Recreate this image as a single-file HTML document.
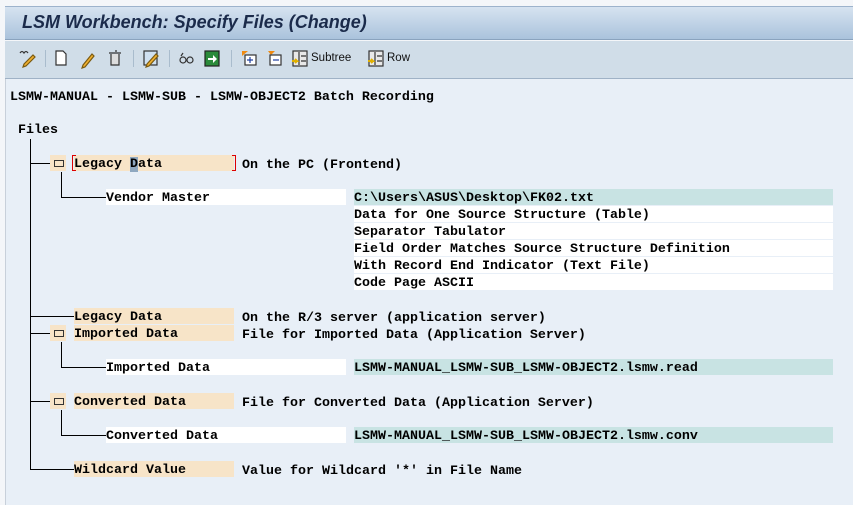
<!DOCTYPE html>
<html><head><meta charset="utf-8"><style>
*{margin:0;padding:0;box-sizing:border-box}
body{width:853px;height:505px;overflow:hidden;background:#f4f6f9;position:relative;font-family:"Liberation Mono",monospace;font-size:13.33px;font-weight:bold;color:#000}
.a{position:absolute}
#title{left:5px;top:6px;width:848px;height:34px;background:linear-gradient(#d6e3f0,#aac3dc);border-top:1px solid #9db3cc;border-bottom:1px solid #8aa3be}
#title span{position:absolute;left:17px;top:5px;font-family:"Liberation Sans",sans-serif;font-style:italic;font-weight:bold;font-size:18px;color:#1b2b4b}
#tb{left:5px;top:41px;width:848px;height:38px;background:#d0dde8;border-bottom:1px solid #9fb2c6}
#ct{left:5px;top:79px;width:848px;height:426px;background:#e8eff7;border-left:1px solid #c8d0da}
.t{position:absolute;line-height:17px;white-space:pre;height:17px;padding-top:2px}
.lab{position:absolute;left:74px;width:160px;height:16px;background:#f7e4c8;line-height:16px;white-space:pre;padding-top:2px}
.wh{position:absolute;left:106px;width:240px;height:16px;background:#fff;line-height:16px;white-space:pre;padding-top:2px}
.val{position:absolute;left:354px;width:479px;height:16px;background:#fff;line-height:16px;white-space:pre;padding-top:2px}
.tl{background:#c8e3e3}
.ln{position:absolute;background:#000}
.fi{position:absolute;left:50px;width:16px;height:16px;background:#f7e4c8}
.fi:after{content:"";position:absolute;left:4px;top:5px;width:8px;height:5px;border:1px solid #333}
.sep{position:absolute;top:50px;width:1px;height:17px;background:#a9bccd}
.tbt{position:absolute;top:52px;font-family:"Liberation Sans",sans-serif;font-weight:normal;font-size:11.5px;color:#111}
</style></head><body>
<div class="a" id="title"><span>LSM Workbench: Specify Files (Change)</span></div>
<div class="a" id="tb"></div>
<svg class="a" style="left:0;top:40px" width="430" height="38">
<g fill="none" stroke-width="1.2">
<path d="M20 13 q2-3 4 0 q2-3 4 0" stroke="#333"/>
<path d="M24 24 l9-9 2 2 -9 9 -3 1z" fill="#f0b030" stroke="#7a5a10"/>
<path d="M56 11 h7 l3 3 v11 h-10z" fill="#fff" stroke="#333"/>
<path d="M83 25 l9-11 2 2 -9 11 -3 1z" fill="#f0b030" stroke="#7a5a10"/>
<path d="M109 13 h12 M111 14 v11 h8 v-11 M115 11 h2" stroke="#333" fill="#ddd"/>
<rect x="144" y="11" width="13" height="14" fill="#cfe0f0" stroke="#333"/>
<path d="M147 24 l9-10 2 2 -9 10 -3 1z" fill="#f0b030" stroke="#7a5a10"/>
<circle cx="183" cy="20" r="3" stroke="#333"/><circle cx="190" cy="20" r="3" stroke="#333"/><path d="M181 16 l2-3" stroke="#333"/>
<rect x="205" y="11" width="14" height="15" fill="#2a8a3a" stroke="#222"/><path d="M208 18 h5 v-3 l4 4 -4 4 v-3 h-5z" fill="#fff" stroke="none"/>
<path d="M242 11 l6 0 -6 5z" fill="#f08a10" stroke="none"/>
<rect x="245" y="15" width="11" height="10" fill="#fff" stroke="#333"/><path d="M250 17 v6 M247 20 h6" stroke="#2040a0"/>
<path d="M268 11 l7 0 -4 4z" fill="#f08a10" stroke="none"/>
<rect x="270" y="15" width="11" height="10" fill="#fff" stroke="#333"/><path d="M273 20 h6" stroke="#2040a0"/>
<rect x="293" y="11" width="14" height="15" fill="#e8e8e8" stroke="#333"/><path d="M299 12 v13 M301 16 h5 M301 21 h5" stroke="#333"/><path d="M292 21 h5 l-2-2 M297 21 l-2 2" stroke="#e0b000" stroke-width="2"/>
<rect x="369" y="11" width="14" height="15" fill="#e8e8e8" stroke="#333"/><path d="M375 12 v13 M377 16 h5 M377 21 h5" stroke="#333"/><path d="M368 21 h5 l-2-2 M373 21 l-2 2" stroke="#e0b000" stroke-width="2"/>
</g></svg>
<div class="sep" style="left:45px"></div><div class="sep" style="left:133px"></div><div class="sep" style="left:169px"></div><div class="sep" style="left:231px"></div>
<span class="tbt" style="left:311px">Subtree</span><span class="tbt" style="left:387px">Row</span>
<div class="a" id="ct"></div>

<div class="t" style="left:10px;top:87px">LSMW-MANUAL - LSMW-SUB - LSMW-OBJECT2 Batch Recording</div>
<div class="t" style="left:18px;top:120px">Files</div>

<div class="ln" style="left:30px;top:139px;width:1px;height:331px"></div>
<div class="ln" style="left:30px;top:163px;width:20px;height:1px"></div>
<div class="ln" style="left:30px;top:316px;width:44px;height:1px"></div>
<div class="ln" style="left:30px;top:333px;width:20px;height:1px"></div>
<div class="ln" style="left:30px;top:401px;width:20px;height:1px"></div>
<div class="ln" style="left:30px;top:469px;width:44px;height:1px"></div>
<div class="ln" style="left:61px;top:172px;width:1px;height:26px"></div>
<div class="ln" style="left:61px;top:197px;width:45px;height:1px"></div>
<div class="ln" style="left:61px;top:342px;width:1px;height:26px"></div>
<div class="ln" style="left:61px;top:367px;width:45px;height:1px"></div>
<div class="ln" style="left:61px;top:410px;width:1px;height:26px"></div>
<div class="ln" style="left:61px;top:435px;width:45px;height:1px"></div>

<div class="fi" style="top:155px"></div>
<div class="lab" style="top:155px">Legacy <span style="background:#8fa8c0">D</span>ata</div>
<div class="a" style="left:72px;top:155px;width:4px;height:16px;border:1px solid #d00;border-right:none"></div>
<div class="a" style="left:232px;top:155px;width:4px;height:16px;border:1px solid #d00;border-left:none"></div>
<div class="t" style="left:242px;top:155px">On the PC (Frontend)</div>

<div class="wh" style="top:189px">Vendor Master</div>
<div class="val tl" style="top:189px">C:\Users\ASUS\Desktop\FK02.txt</div>
<div class="val" style="top:206px">Data for One Source Structure (Table)</div>
<div class="val" style="top:223px">Separator Tabulator</div>
<div class="val" style="top:240px">Field Order Matches Source Structure Definition</div>
<div class="val" style="top:257px">With Record End Indicator (Text File)</div>
<div class="val" style="top:274px">Code Page ASCII</div>

<div class="lab" style="top:308px">Legacy Data</div>
<div class="t" style="left:242px;top:308px">On the R/3 server (application server)</div>
<div class="fi" style="top:325px"></div>
<div class="lab" style="top:325px">Imported Data</div>
<div class="t" style="left:242px;top:325px">File for Imported Data (Application Server)</div>
<div class="wh" style="top:359px">Imported Data</div>
<div class="val tl" style="top:359px">LSMW-MANUAL_LSMW-SUB_LSMW-OBJECT2.lsmw.read</div>

<div class="fi" style="top:393px"></div>
<div class="lab" style="top:393px">Converted Data</div>
<div class="t" style="left:242px;top:393px">File for Converted Data (Application Server)</div>
<div class="wh" style="top:427px">Converted Data</div>
<div class="val tl" style="top:427px">LSMW-MANUAL_LSMW-SUB_LSMW-OBJECT2.lsmw.conv</div>

<div class="lab" style="top:461px">Wildcard Value</div>
<div class="t" style="left:242px;top:461px">Value for Wildcard '*' in File Name</div>
</body></html>
